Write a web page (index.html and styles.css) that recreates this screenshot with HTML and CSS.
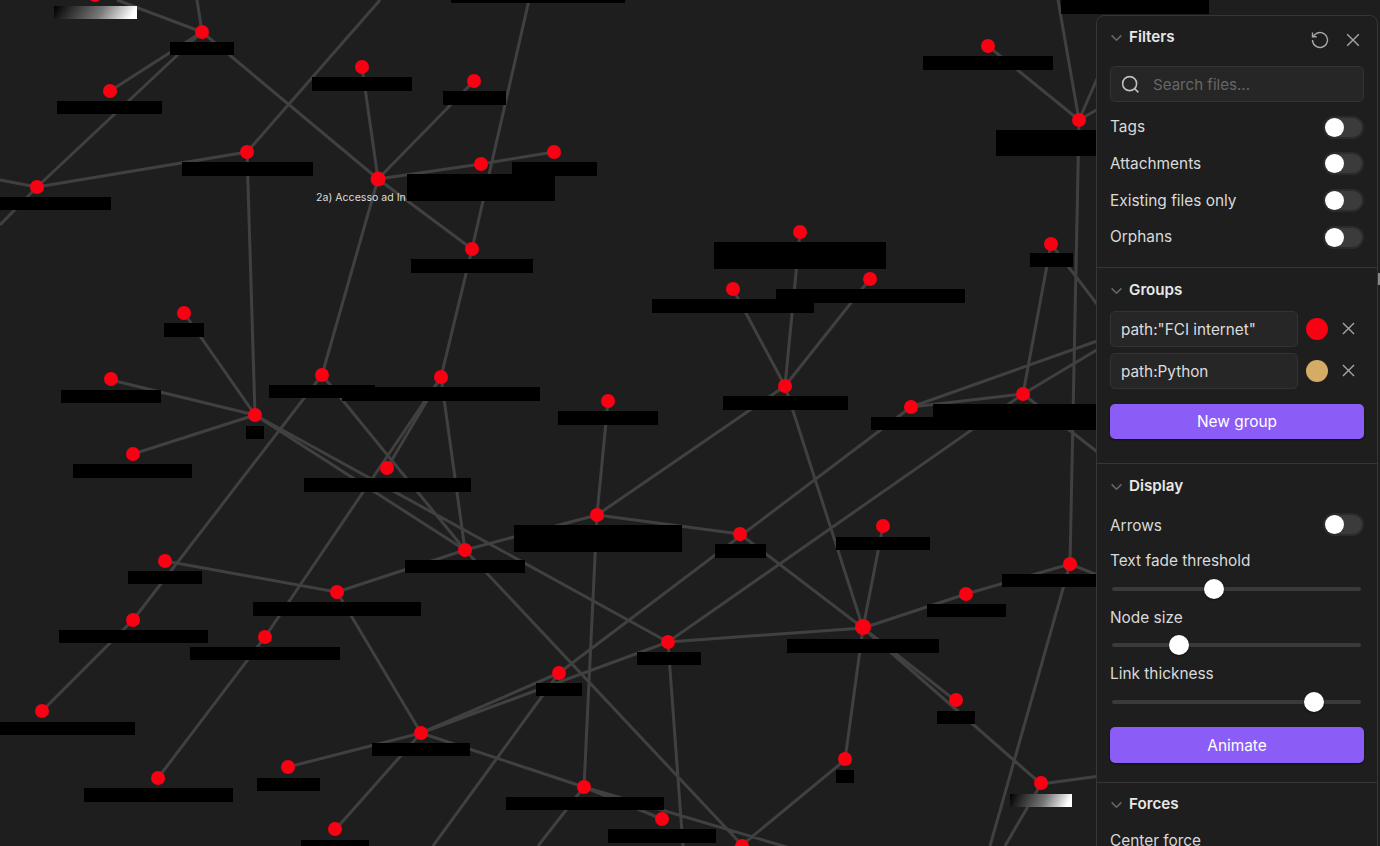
FILE: index.html
```html
<!DOCTYPE html>
<html lang="en">
<head>
<meta charset="utf-8">
<title>Graph view</title>
<link rel="stylesheet" href="styles.css">
</head>
<body>
<main class="stage">
  <svg class="graph" viewBox="0 0 1380 846" width="1380" height="846" aria-label="Graph">
    <defs>
      <linearGradient id="fade" x1="0" y1="0" x2="1" y2="0.1">
        <stop offset="0" stop-color="#000"/>
        <stop offset="0.6" stop-color="#777"/>
        <stop offset="1" stop-color="#fff"/>
      </linearGradient>
    </defs>
    <path class="edges" d="M117 0L202 32M197 0L202 32M202 32L110 91M202 32L37 187L0 225M202 32L378 179M380 0L247 152L37 187L0 180M247 152L255 415M362 67L378 179M474 81L378 179M378 179L481 164L554 152M378 179L472 249M378 179L322 375M529 0L472 249L441 377M1058 0L1079 120L1070 564L990 846M988 46L1079 120M1079 120L1100 72M1079 120L1100 108M1051 244L1023 394M1051 244L1100 308M800 232L785 386M733 289L785 386M870 279L785 386M785 386L597 515M785 386L863 628M184 313L255 415M111 380L255 415M133 454L255 415M322 375L133 620L42 711M322 375L465 550M255 415L465 550M255 415L668 642M441 377L265 637L158 778M441 377L387 468M441 377L465 550M608 401L597 515M597 515L740 534M597 515L465 550L337 592M597 515L584 787M668 642L1023 394M559 673L911 407M740 534L863 628M165 561L337 592L421 733M465 550L742 845M421 733L559 673M421 733L668 642L863 628M421 733L288 767M421 733L335 830M421 733L584 787L662 819M584 787L790 848M559 673L433 846M584 787L538 846M668 642L683 846M863 628L883 526M863 628L966 594L1070 564L1100 576M863 628L956 701M863 628L1041 784M863 628L845 760L742 845M1041 784L1005 846M1041 784L1100 776M1023 394L911 407L1100 340M1023 394L1100 348M1023 394L1100 454"/>
    <g class="nodes">
      <circle cx="202" cy="32" r="7"/><circle cx="110" cy="91" r="7"/><circle cx="362" cy="67" r="7"/><circle cx="474" cy="81" r="7"/>
      <circle cx="37" cy="187" r="7"/><circle cx="247" cy="152" r="7"/><circle cx="378" cy="179" r="7.5"/><circle cx="481" cy="164" r="7"/>
      <circle cx="554" cy="152" r="7"/><circle cx="472" cy="249" r="7"/><circle cx="988" cy="46" r="7"/><circle cx="1079" cy="120" r="7"/>
      <circle cx="1051" cy="244" r="7"/><circle cx="800" cy="232" r="7"/><circle cx="733" cy="289" r="7"/><circle cx="870" cy="279" r="7"/>
      <circle cx="785" cy="386" r="7"/><circle cx="184" cy="313" r="7"/><circle cx="111" cy="379" r="7"/><circle cx="255" cy="415" r="7"/>
      <circle cx="133" cy="454" r="7"/><circle cx="322" cy="375" r="7"/><circle cx="441" cy="377" r="7"/><circle cx="387" cy="468" r="7"/>
      <circle cx="608" cy="401" r="7"/><circle cx="911" cy="407" r="7"/><circle cx="1023" cy="394" r="7"/><circle cx="597" cy="515" r="7"/>
      <circle cx="740" cy="534" r="7"/><circle cx="883" cy="526" r="7"/><circle cx="465" cy="550" r="7"/><circle cx="165" cy="561" r="7"/>
      <circle cx="337" cy="592" r="7"/><circle cx="133" cy="620" r="7"/><circle cx="265" cy="637" r="7"/><circle cx="863" cy="627" r="8"/>
      <circle cx="966" cy="594" r="7"/><circle cx="1070" cy="564" r="7"/><circle cx="668" cy="642" r="7"/><circle cx="559" cy="673" r="7"/>
      <circle cx="956" cy="700" r="7"/><circle cx="42" cy="711" r="7"/><circle cx="421" cy="733" r="7"/><circle cx="158" cy="778" r="7"/>
      <circle cx="288" cy="767" r="7"/><circle cx="584" cy="787" r="7"/><circle cx="845" cy="759" r="7"/><circle cx="1041" cy="783" r="7"/>
      <circle cx="662" cy="819" r="7"/><circle cx="335" cy="829" r="7"/><circle cx="742" cy="846" r="7"/><circle cx="95" cy="-5" r="7"/>
    </g>
    <text class="node-label" x="316" y="200.5">2a) Accesso ad In</text>
    <g class="masks">
      <rect x="451" y="0" width="174" height="3"/><rect x="1061" y="0" width="148" height="14"/>
      <rect x="170" y="42" width="64" height="13"/><rect x="57" y="101" width="105" height="13"/><rect x="312" y="77" width="100" height="14"/><rect x="443" y="91" width="63" height="14"/>
      <rect x="0" y="197" width="111" height="13"/><rect x="182" y="162" width="131" height="14"/><rect x="407" y="174" width="148" height="27"/><rect x="512" y="162" width="85" height="14"/>
      <rect x="411" y="259" width="122" height="14"/><rect x="923" y="56" width="130" height="14"/><rect x="996" y="130" width="100" height="26"/><rect x="1030" y="253" width="43" height="14"/>
      <rect x="714" y="242" width="172" height="27"/><rect x="652" y="299" width="162" height="14"/><rect x="776" y="289" width="189" height="14"/><rect x="723" y="396" width="125" height="14"/>
      <rect x="164" y="323" width="40" height="14"/><rect x="61" y="390" width="100" height="13"/><rect x="246" y="426" width="18" height="13"/><rect x="73" y="464" width="119" height="14"/>
      <rect x="269" y="385" width="106" height="13"/><rect x="342" y="387" width="198" height="14"/><rect x="304" y="478" width="167" height="14"/><rect x="558" y="411" width="100" height="14"/>
      <rect x="871" y="417" width="130" height="13"/><rect x="933" y="404" width="163" height="26"/><rect x="514" y="525" width="168" height="27"/><rect x="715" y="544" width="51" height="14"/>
      <rect x="836" y="537" width="94" height="13"/><rect x="405" y="560" width="120" height="13"/><rect x="128" y="571" width="74" height="13"/><rect x="253" y="602" width="168" height="14"/>
      <rect x="59" y="630" width="149" height="13"/><rect x="190" y="647" width="150" height="13"/><rect x="787" y="639" width="152" height="14"/><rect x="927" y="604" width="79" height="13"/>
      <rect x="1002" y="574" width="94" height="13"/><rect x="637" y="652" width="64" height="13"/><rect x="536" y="683" width="46" height="13"/><rect x="937" y="711" width="38" height="13"/>
      <rect x="0" y="722" width="135" height="13"/><rect x="372" y="743" width="98" height="13"/><rect x="84" y="788" width="149" height="14"/><rect x="257" y="778" width="63" height="13"/>
      <rect x="506" y="797" width="158" height="13"/><rect x="836" y="770" width="18" height="13"/><rect x="608" y="829" width="108" height="14"/><rect x="301" y="840" width="68" height="6"/>
      <rect class="fade" x="54" y="6" width="83" height="13"/><rect class="fade" x="1010" y="794" width="62" height="13"/>
    </g>
  </svg>

  <aside class="panel">
    <section class="section filters">
      <header class="section-head">
        <svg class="chevron" viewBox="0 0 12 12"><path d="M1.5 4l4.5 4.5L10.5 4"/></svg>
        <h2>Filters</h2>
        <div class="head-tools">
          <svg class="tool" viewBox="0 0 24 24"><path d="M3 12a9 9 0 1 0 3-6.7L3 8"/><path d="M3 3v5h5"/></svg>
          <svg class="tool" viewBox="0 0 24 24"><path d="M5 5l14 14M19 5L5 19"/></svg>
        </div>
      </header>
      <div class="search">
        <svg class="search-icon" viewBox="0 0 24 24"><circle cx="11" cy="11" r="8"/><path d="M21 21l-4.3-4.3"/></svg>
        <span>Search files...</span>
      </div>
      <div class="toggles">
        <div class="row"><span>Tags</span><i class="toggle"></i></div>
        <div class="row"><span>Attachments</span><i class="toggle"></i></div>
        <div class="row"><span>Existing files only</span><i class="toggle"></i></div>
        <div class="row"><span>Orphans</span><i class="toggle"></i></div>
      </div>
    </section>

    <section class="section groups">
      <header class="section-head">
        <svg class="chevron" viewBox="0 0 12 12"><path d="M1.5 4l4.5 4.5L10.5 4"/></svg>
        <h2>Groups</h2>
      </header>
      <div class="group-list">
        <div class="group">
          <div class="query">path:"FCI internet"</div>
          <i class="swatch swatch-red"></i>
          <svg class="remove" viewBox="0 0 24 24"><path d="M5 5l14 14M19 5L5 19"/></svg>
        </div>
        <div class="group">
          <div class="query">path:Python</div>
          <i class="swatch swatch-gold"></i>
          <svg class="remove" viewBox="0 0 24 24"><path d="M5 5l14 14M19 5L5 19"/></svg>
        </div>
      </div>
      <button class="cta new-group">New group</button>
    </section>

    <section class="section display">
      <header class="section-head">
        <svg class="chevron" viewBox="0 0 12 12"><path d="M1.5 4l4.5 4.5L10.5 4"/></svg>
        <h2>Display</h2>
      </header>
      <div class="row arrows"><span>Arrows</span><i class="toggle"></i></div>
      <div class="sliders">
        <div class="slider-label">Text fade threshold</div>
        <div class="slider"><i class="thumb" style="left:41%"></i></div>
        <div class="slider-label">Node size</div>
        <div class="slider"><i class="thumb" style="left:26.9%"></i></div>
        <div class="slider-label">Link thickness</div>
        <div class="slider"><i class="thumb" style="left:81.1%"></i></div>
      </div>
      <button class="cta animate">Animate</button>
    </section>

    <section class="section forces">
      <header class="section-head">
        <svg class="chevron" viewBox="0 0 12 12"><path d="M1.5 4l4.5 4.5L10.5 4"/></svg>
        <h2>Forces</h2>
      </header>
      <div class="slider-label center-force">Center force</div>
    </section>
  </aside>
  <i class="scroll-thumb"></i>
</main>
</body>
</html>
```

FILE: styles.css
```css
* { box-sizing: border-box; }
html, body { margin: 0; height: 100%; overflow: hidden; background: #1e1e1e; }
body { font-family: Inter, "Noto Sans", sans-serif; font-size: 15.4px; color: #dadada; }

.stage { position: relative; width: 1380px; height: 846px; overflow: hidden; }

.graph { position: absolute; left: 0; top: 0; display: block; }
.edges { fill: none; stroke: #404040; stroke-width: 3; }
.nodes circle { fill: #f90012; }
.masks rect { fill: #000; }
.masks .fade { fill: url(#fade); }
.node-label { font-family: Inter, sans-serif; font-size: 10.6px; fill: #dcdcdc; }

.panel {
  position: absolute; left: 1096px; top: 15px; width: 282px; height: 860px;
  background: #1e1e1e; border: 1px solid #363636; border-radius: 8px; overflow: hidden;
}
.section { padding: 11px 13px 0; border-bottom: 1px solid #363636; }
.section:last-child { border-bottom: 0; }
.section-head { display: flex; align-items: center; height: 20px; }
.section-head h2 { margin: 0; font-size: 15.2px; font-weight: 600; color: #e8e8e8; line-height: 20px; }
.chevron { width: 13px; height: 13px; margin-right: 6px; flex: none; }
.chevron path { fill: none; stroke: #666; stroke-width: 1.5; }
.head-tools { margin-left: auto; display: flex; align-items: center; gap: 13px; position: relative; top: 3px; left: -1px; }
.tool { width: 20px; height: 20px; fill: none; stroke: #a6a6a6; stroke-width: 1.7; }

.filters { height: 252px; }
.search {
  display: flex; align-items: center; gap: 12px; height: 36px; margin-top: 19px; padding-left: 9px;
  background: #262626; border: 1px solid #333; border-radius: 5px; color: #666; font-size: 15.1px;
}
.search-icon { width: 21px; height: 21px; fill: none; stroke: #bdbdbd; stroke-width: 1.8; flex: none; }
.toggles { margin-top: 7px; }
.toggles .row span { padding-bottom: 1px; }
.row { display: flex; align-items: center; justify-content: space-between; height: 36.67px; }
.toggle {
  display: block; position: relative; width: 41px; height: 23px; border-radius: 12px;
  background: #3b3b3b; border: 2px solid #2b2b2b;
}
.toggle::after {
  content: ""; position: absolute; left: 0; top: 0; width: 19px; height: 19px; border-radius: 50%; background: #fff;
}

.groups { height: 196px; padding-top: 12px; }
.group-list { margin-top: 11px; display: flex; flex-direction: column; gap: 6.5px; }
.group { display: flex; align-items: center; }
.query {
  width: 188px; height: 35.5px; line-height: 35px; padding-left: 10px;
  background: #262626; border: 1px solid #333; border-radius: 5px; color: #dcdcdc; font-size: 15.3px;
}
.swatch { width: 22px; height: 22px; border-radius: 50%; margin-left: 8px; flex: none; }
.swatch-red { background: #f90012; }
.swatch-gold { background: #d4ac66; }
.remove { width: 19px; height: 19px; margin-left: 11px; fill: none; stroke: #a6a6a6; stroke-width: 1.7; flex: none; }

.cta {
  display: block; width: 254px; height: 35px; border: 0; border-radius: 5px; padding: 0;
  background: #8b5cf6; color: #fff; font: 15.4px Inter, sans-serif; box-shadow: 0 1px 2px rgba(0,0,0,.6);
}
.new-group { margin-top: 15px; }

.display { height: 319px; padding-top: 12px; }
.arrows { margin-top: 10.67px; }
.arrows span { padding-top: 1px; }
.sliders { margin-top: 7px; }
.slider-label { height: 20px; line-height: 22px; color: #dadada; }
.slider { position: relative; height: 4px; margin: 16.5px 3px 15.9px 2px; background: #3a3a3a; border-radius: 2px; }
.thumb {
  position: absolute; top: -8px; width: 20px; height: 20px; margin-left: -10px; border-radius: 50%; background: #fff;
  box-shadow: 0 1px 2px rgba(0,0,0,.5);
}
.animate { height: 36px; margin-top: 23.6px; }

.center-force { margin-top: 17px; line-height: 20px; }
.scroll-thumb { position: absolute; left: 1378px; top: 273px; width: 2px; height: 12px; background: #8a8a8a; }
```
